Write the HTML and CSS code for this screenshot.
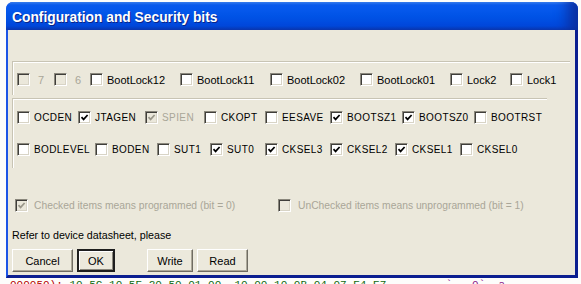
FILE: index.html
```html
<!DOCTYPE html>
<html lang="en">
<head>
    <meta charset="UTF-8">
    <title>Configuration and Security bits</title>
    <link rel="stylesheet" href="styles.css">
</head>
<body>
  <div class="win">
    <div class="titlebar">Configuration and Security bits</div>
    <div class="client">

      <div class="group group-lock">
        <div class="row row-lock">
          <span class="fuse off digit"><span class="cb"></span><span class="txt">7</span></span>
          <span class="fuse off digit"><span class="cb"></span><span class="txt">6</span></span>
          <span class="fuse"><span class="cb"></span><span class="txt">BootLock12</span></span>
          <span class="fuse"><span class="cb"></span><span class="txt">BootLock11</span></span>
          <span class="fuse"><span class="cb"></span><span class="txt">BootLock02</span></span>
          <span class="fuse"><span class="cb"></span><span class="txt">BootLock01</span></span>
          <span class="fuse"><span class="cb"></span><span class="txt">Lock2</span></span>
          <span class="fuse"><span class="cb"></span><span class="txt">Lock1</span></span>
        </div>
      </div>

      <div class="group group-fuse">
        <div class="row row-high">
          <span class="fuse"><span class="cb"></span><span class="txt">OCDEN</span></span>
          <span class="fuse"><span class="cb on"><svg viewBox="0 0 9 9"><path d="M1.5 4.2 L3.6 6.4 L7.6 2"/></svg></span><span class="txt">JTAGEN</span></span>
          <span class="fuse off"><span class="cb on"><svg viewBox="0 0 9 9"><path d="M1.5 4.2 L3.6 6.4 L7.6 2"/></svg></span><span class="txt">SPIEN</span></span>
          <span class="fuse"><span class="cb"></span><span class="txt">CKOPT</span></span>
          <span class="fuse"><span class="cb"></span><span class="txt">EESAVE</span></span>
          <span class="fuse"><span class="cb on"><svg viewBox="0 0 9 9"><path d="M1.5 4.2 L3.6 6.4 L7.6 2"/></svg></span><span class="txt">BOOTSZ1</span></span>
          <span class="fuse"><span class="cb on"><svg viewBox="0 0 9 9"><path d="M1.5 4.2 L3.6 6.4 L7.6 2"/></svg></span><span class="txt">BOOTSZ0</span></span>
          <span class="fuse"><span class="cb"></span><span class="txt">BOOTRST</span></span>
        </div>
        <div class="row row-low">
          <span class="fuse"><span class="cb"></span><span class="txt">BODLEVEL</span></span>
          <span class="fuse"><span class="cb"></span><span class="txt">BODEN</span></span>
          <span class="fuse"><span class="cb"></span><span class="txt">SUT1</span></span>
          <span class="fuse"><span class="cb on"><svg viewBox="0 0 9 9"><path d="M1.5 4.2 L3.6 6.4 L7.6 2"/></svg></span><span class="txt">SUT0</span></span>
          <span class="fuse"><span class="cb on"><svg viewBox="0 0 9 9"><path d="M1.5 4.2 L3.6 6.4 L7.6 2"/></svg></span><span class="txt">CKSEL3</span></span>
          <span class="fuse"><span class="cb on"><svg viewBox="0 0 9 9"><path d="M1.5 4.2 L3.6 6.4 L7.6 2"/></svg></span><span class="txt">CKSEL2</span></span>
          <span class="fuse"><span class="cb on"><svg viewBox="0 0 9 9"><path d="M1.5 4.2 L3.6 6.4 L7.6 2"/></svg></span><span class="txt">CKSEL1</span></span>
          <span class="fuse"><span class="cb"></span><span class="txt">CKSEL0</span></span>
        </div>
      </div>

      <div class="legend">
        <span class="fuse off legend-item"><span class="cb on"><svg viewBox="0 0 9 9"><path d="M1.5 4.2 L3.6 6.4 L7.6 2"/></svg></span><span class="txt">Checked items means programmed (bit = 0)</span></span>
        <span class="fuse off"><span class="cb"></span><span class="txt">UnChecked items means unprogrammed (bit = 1)</span></span>
      </div>

      <div class="note">Refer to device datasheet, please</div>

      <div class="buttons">
        <button class="btn btn-cancel">Cancel</button>
        <button class="btn btn-ok">OK</button>
        <button class="btn btn-write">Write</button>
        <button class="btn btn-read">Read</button>
      </div>
    </div>
  </div>

  <div class="console"><span class="addr">000050):</span> <span class="hex">10 5C 10 5E 20 50 01 00</span>  <span class="hex">10 00 10 0B 04 07 E4 E7</span>         <span class="chr">`   0`  a</span></div>
</body>
</html>
```

FILE: styles.css
```css
body{
  margin:0;
  background:#fdfdfb;
  font-family:"Liberation Sans", Arial, sans-serif;
  overflow:hidden;
}

/* dialog frame */
.win{
  margin:2px 0 0 6px;
  width:572px;
  height:276px;
  display:flex;
  flex-direction:column;
  border-radius:7px 7px 0 0;
  background:#0a3fd8;
  overflow:hidden;
}
.titlebar{
  height:28px;
  box-sizing:border-box;
  padding:4px 0 0 6px;
  line-height:24px;
  font-size:13.8px;
  font-weight:bold;
  color:#fff;
  text-shadow:1px 1px 0 #0b2487;
  background:linear-gradient(to bottom, #3d86f5 0px, #0a5cf0 3px, #0053e6 14px, #0048dc 24px, #0a37b0 28px);
  box-shadow:inset -18px 0 14px -8px #0b2fa0;
}
.client{
  flex:1;
  background:#ebe8db;
  border-left:2px solid #1c55e6;
  border-right:3px solid #0b1e90;
  border-bottom:3px solid #0b1e90;
  display:flex;
  flex-direction:column;
  font-size:11px;
  color:#000;
}

/* group boxes */
.group{
  margin-left:4px;
  border-top:1px solid #c8c4b4;
  border-left:1px solid #c8c4b4;
  box-shadow:inset 1px 1px 0 #fff;
  box-sizing:border-box;
}
.group-lock{
  margin-top:31px;
  width:558px;
  height:34px;
  padding:11px 0 0 4px;
}
.group-fuse{
  margin-top:3px;
  width:535px;
  height:70px;
  padding:12px 0 0 4px;
  display:flex;
  flex-direction:column;
  gap:19px;
}

.row{
  display:grid;
  align-items:center;
  height:13px;
}
.row-lock{ grid-template-columns:37px 36px 90px 90px 90px 90px 60px auto; }
.row-high{ grid-template-columns:61px 67px 59px 61px 65px 72px 72px auto; }
.row-low{ grid-template-columns:78px 62px 53px 55px 65px 65px 65px auto; }
.row-high,
.row-low{
  font-size:10px;
  letter-spacing:0.4px;
}

.fuse{
  display:flex;
  align-items:center;
  gap:4px;
  white-space:nowrap;
}
.digit{ gap:8px; }

/* classic sunken check box */
.cb{
  width:13px;
  height:13px;
  flex:none;
  box-sizing:border-box;
  border:1px solid;
  border-color:#8a877c #fff #fff #8a877c;
  box-shadow:inset 1px 1px 0 #3f3e3a, inset -1px -1px 0 #d8d4c6;
  background:#fff;
  display:flex;
  align-items:center;
  justify-content:center;
}
.cb svg{
  width:9px;
  height:9px;
}
.cb path{
  fill:none;
  stroke:#000;
  stroke-width:1.7;
}
.off .txt{ color:#a9a698; }
.off .cb{ background:#ebe8db; }
.off .cb path{ stroke:#9a978a; }

.legend{
  margin-top:31px;
  padding-left:7px;
  display:flex;
  height:13px;
  align-items:center;
  font-size:10.3px;
}
.legend-item{ width:263px; gap:6px; }
.legend .fuse:last-child{ gap:7px; }

.note{
  margin:17px 0 0 4px;
  height:13px;
  line-height:13px;
  font-size:10.7px;
}

.buttons{
  margin:7px 0 0 4px;
  display:flex;
  gap:4px;
}
.btn{
  height:23px;
  padding:0;
  font-family:"Liberation Sans", Arial, sans-serif;
  font-size:11px;
  color:#000;
  background:#ece9dc;
  border:1px solid;
  border-color:#fff #6f6c62 #6f6c62 #fff;
  box-shadow:inset -1px -1px 0 #aca899;
}
.btn-cancel{ width:61px; }
.btn-ok{
  width:38px;
  border:2px solid #1e1e1e;
  box-shadow:inset 1px 1px 0 #fff, inset -1px -1px 0 #8a877c;
}
.btn-write{ width:46px; margin-left:28px; }
.btn-read{ width:51px; }

/* console text behind the dialog */
.console{
  padding-left:10px;
  margin-top:1px;
  font-family:"Liberation Mono", monospace;
  font-size:11px;
  line-height:12px;
  white-space:pre;
}
.addr{ color:#b80000; }
.hex{ color:#106a10; }
.chr{ color:#8a1a8a; }
```
